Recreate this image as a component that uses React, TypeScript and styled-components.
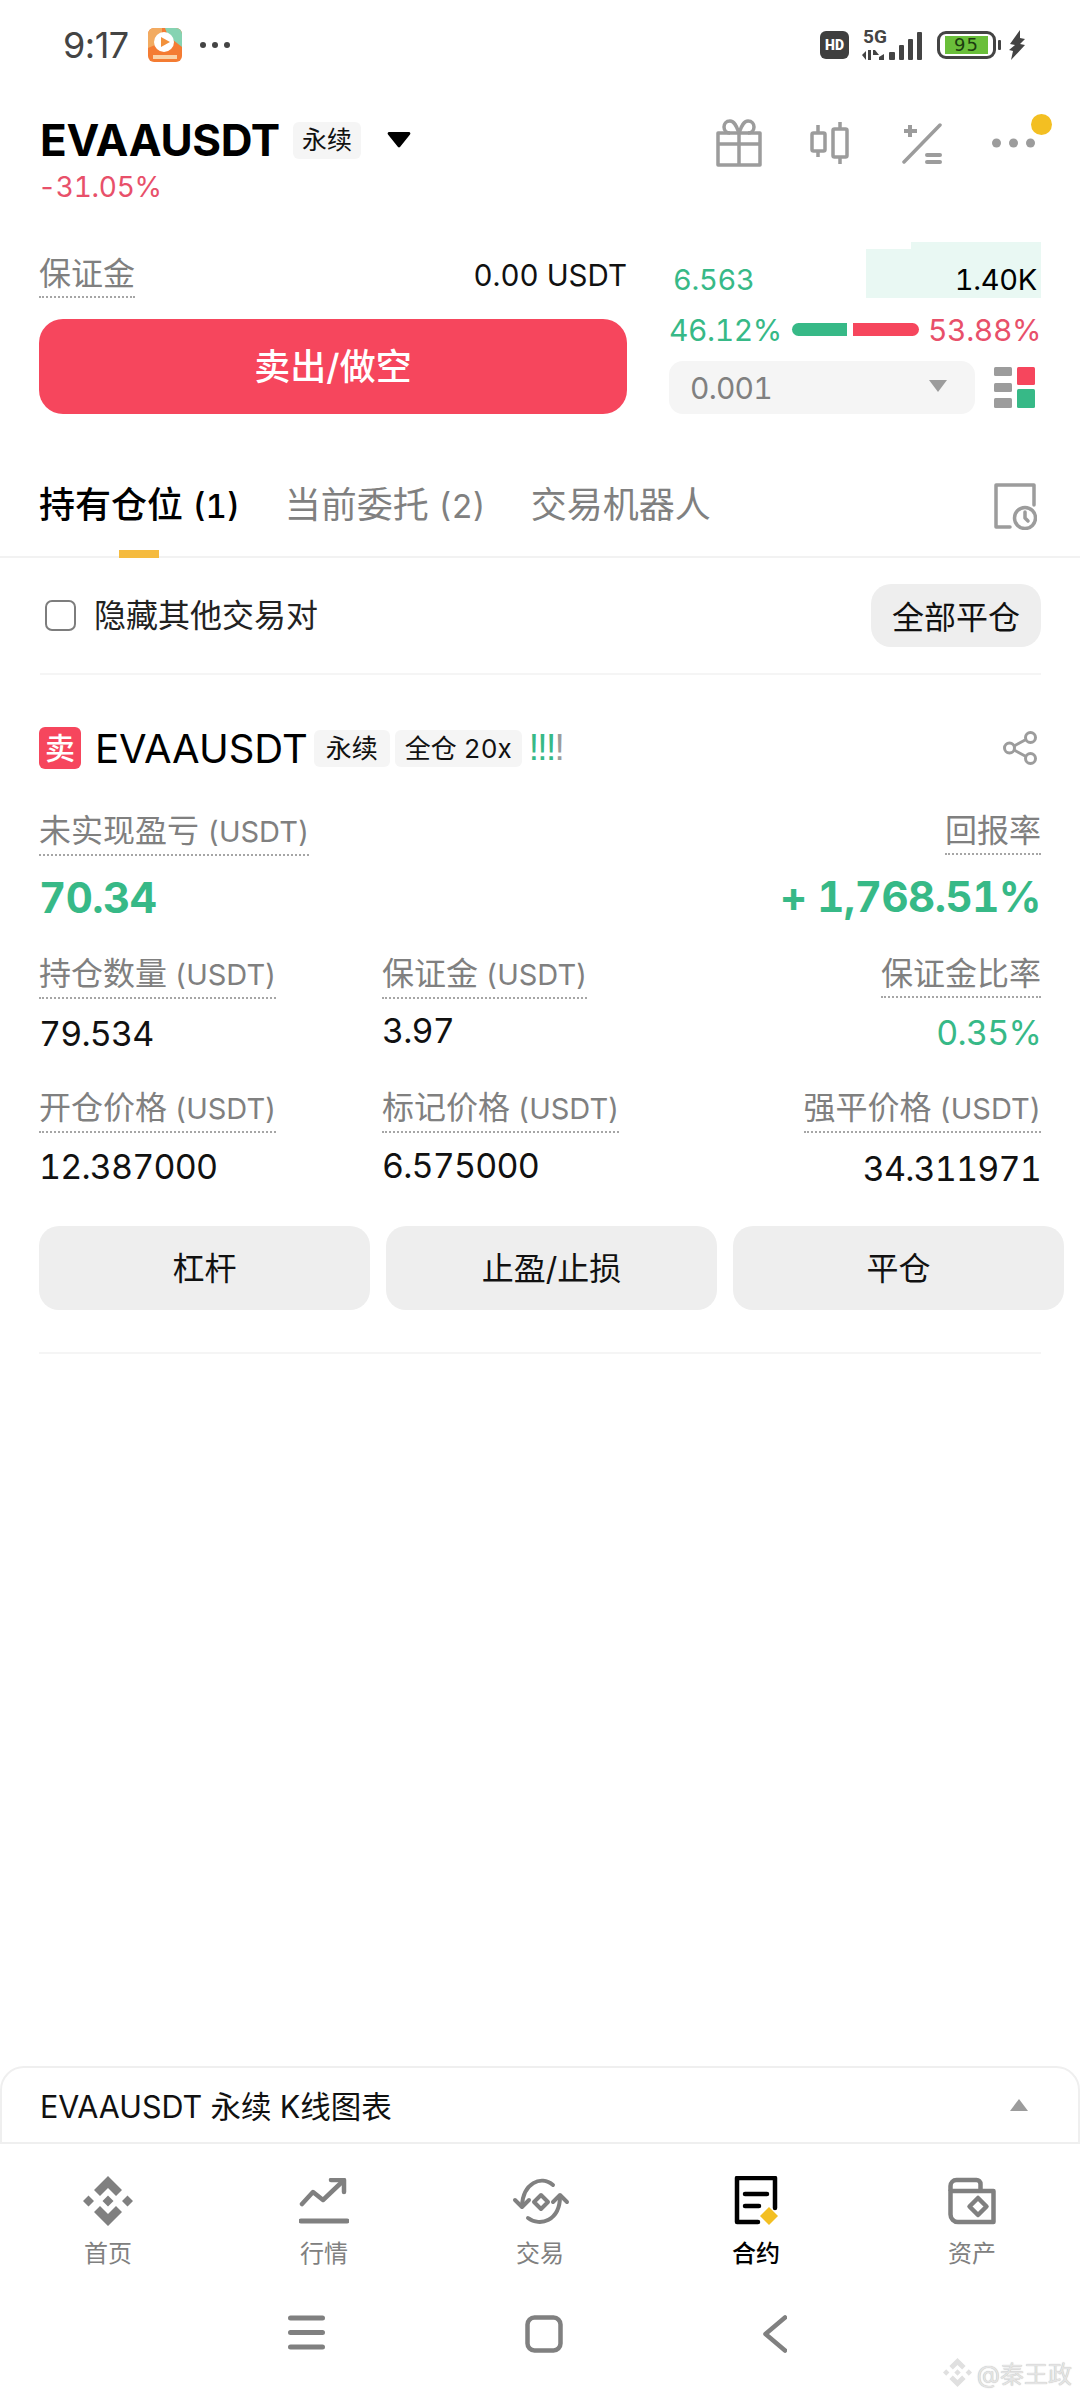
import React from 'react';
import styled, { createGlobalStyle } from 'styled-components';

const green = '#37b987';
const red = '#f6465d';
const grey = '#808080';
const iconGrey = '#9c9c9c';

const GlobalStyle = createGlobalStyle`
  html, body { margin: 0; padding: 0; background: #fff; }
  body {
    font-family: Inter, "Noto Sans CJK SC", sans-serif;
    font-variant-numeric: tabular-nums;
    color: #000;
  }
  * { box-sizing: border-box; }
`;

const Page = styled.div`
  position: relative;
  width: 1080px;
  height: 2400px;
  display: flex;
  flex-direction: column;
  overflow: hidden;
`;

/* status bar */
const StatusBar = styled.div`
  height: 90px;
  flex: none;
  display: flex;
  align-items: center;
  padding: 0 55px 0 63px;
`;
const Clock = styled.span`
  font-size: 36px;
  font-variant-numeric: normal;
  color: #444;
  letter-spacing: -0.5px;
  margin-right: 19px;
`;
const StatusRight = styled.div`
  margin-left: auto;
  display: flex;
  align-items: center;
`;
const HdBadge = styled.span`
  width: 29px;
  height: 28px;
  border-radius: 6px;
  background: #3f3f3f;
  color: #fff;
  font: 900 14px Roboto, sans-serif;
  display: flex;
  align-items: center;
  justify-content: center;
  margin-right: 13px;
`;
const Network = styled.div`
  position: relative;
  display: flex;
`;
const NetworkLabel = styled.span`
  position: absolute;
  left: 1px;
  top: -3px;
  font: 700 19px/20px Roboto, sans-serif;
  color: #444;
`;
const Battery = styled.div`
  width: 59px;
  height: 28px;
  border: 3px solid #444;
  border-radius: 9px;
  padding: 2px 5px;
  margin-left: 15px;
`;
const BatteryFill = styled.div`
  height: 100%;
  background: #6abf3a;
  color: #1c3d10;
  line-height: 18px;
  text-align: center;
  letter-spacing: 1px;
  font-family: "DejaVu Sans", sans-serif;
  font-size: 18px;
`;
const BatteryNub = styled.div`
  width: 3px;
  height: 10px;
  background: #444;
  border-radius: 1px;
  margin: 0 8px 0 2px;
`;

/* header */
const Header = styled.header`
  height: 120px;
  flex: none;
  padding: 29px 28px 0 40px;
  display: flex;
  justify-content: space-between;
  align-items: flex-start;
`;
const TitleRow = styled.div`
  display: flex;
  align-items: center;
  height: 42px;
`;
const Symbol = styled.h1`
  margin: 0;
  font-size: 44px;
  line-height: 42px;
  font-weight: 700;
  letter-spacing: -0.3px;
`;
const Tag = styled.span<{ $pad?: number; $size?: number }>`
  height: 37px;
  padding: 0 ${(p) => p.$pad ?? 9}px;
  border-radius: 6px;
  background: #f5f5f5;
  font-size: ${(p) => p.$size ?? 25}px;
  line-height: 37px;
  white-space: nowrap;
  color: #111;
`;
const TitleTag = styled(Tag)`
  margin-left: 13px;
`;
const Change = styled.div`
  margin-top: 8px;
  margin-left: -2px;
  font-size: 28px;
  line-height: 36px;
  letter-spacing: -0.3px;
  color: #e8506a;
`;
const HeaderIcons = styled.div`
  position: relative;
  display: flex;
  align-items: center;
`;
const NoticeDot = styled.span`
  position: absolute;
  top: -5px;
  right: 0;
  width: 21px;
  height: 21px;
  border-radius: 50%;
  background: #f3bf22;
`;

/* trade panel */
const Trade = styled.section`
  height: 174px;
  flex: none;
  margin-top: 30px;
  padding: 0 39px 0 39px;
  display: flex;
  justify-content: space-between;
`;
const TradeLeft = styled.div`
  width: 588px;
  display: flex;
  flex-direction: column;
  justify-content: flex-end;
`;
const MarginRow = styled.div`
  display: flex;
  justify-content: space-between;
  align-items: flex-start;
  margin-bottom: 21px;
`;
const Label = styled.span`
  display: inline-block;
  font-size: 32px;
  line-height: 34px;
  color: ${grey};
  border-bottom: 2px dotted #a6a6a6;
  padding-bottom: 5px;
  white-space: nowrap;
`;
const Unit = styled.span`
  font-size: 29px;
`;
const Balance = styled.span`
  font-size: 29.5px;
  line-height: 36px;
  color: #111;
`;
const SellButton = styled.button`
  height: 95px;
  padding: 0 0 5px;
  border: 0;
  border-radius: 24px;
  background: ${red};
  color: #fff;
  font: inherit;
  font-size: 36px;
  font-weight: 500;
`;
const TradeRight = styled.div`
  width: 372px;
  display: flex;
  flex-direction: column;
  justify-content: flex-end;
`;
const DepthRow = styled.div`
  height: 56px;
  display: flex;
  justify-content: space-between;
  align-items: flex-end;
  padding: 0 4px 0 4px;
  font-size: 29px;
  line-height: 36px;
  letter-spacing: -0.3px;
  background:
    linear-gradient(#e9f8f3, #e9f8f3) right top / 130px 100% no-repeat,
    linear-gradient(#e9f8f3, #e9f8f3) right bottom / 175px 49px no-repeat;
`;
const Bid = styled.span`
  color: ${green};
`;
const Ratio = styled.div`
  height: 63px;
  display: flex;
  align-items: center;
  justify-content: space-between;
  font-size: 30px;
  letter-spacing: -0.4px;
`;
const RatioBar = styled.div`
  width: 127px;
  height: 13px;
  display: flex;
  gap: 6px;
`;
const RatioFill = styled.span<{ $side: 'buy' | 'sell' }>`
  background: ${(p) => (p.$side === 'buy' ? green : red)};
  border-radius: ${(p) => (p.$side === 'buy' ? '7px 0 0 7px' : '0 7px 7px 0')};
`;
const Sell = styled.span`
  color: #e8506a;
`;
const PrecisionRow = styled.div`
  display: flex;
  align-items: center;
  justify-content: space-between;
`;
const PrecisionSelect = styled.div`
  width: 306px;
  height: 53px;
  border-radius: 14px;
  background: #f5f5f5;
  padding: 0 28px 0 21px;
  display: flex;
  align-items: center;
  justify-content: space-between;
  font-size: 30px;
  letter-spacing: -0.8px;
  color: ${grey};
`;
const CaretDown = styled.span`
  width: 0;
  height: 0;
  border-left: 9px solid transparent;
  border-right: 9px solid transparent;
  border-top: 12px solid ${iconGrey};
  margin-top: -4px;
`;
const LayoutBox = styled.span`
  display: flex;
  margin-right: 6px;
`;

/* tabs */
const Tabs = styled.nav`
  height: 144px;
  flex: none;
  padding: 69px 43px 0 39px;
  display: flex;
  align-items: stretch;
  gap: 45px;
  border-bottom: 2px solid #f2f2f2;
`;
const Tab = styled.div<{ $active?: boolean }>`
  position: relative;
  font-size: 36px;
  line-height: 44px;
  font-weight: ${(p) => (p.$active ? 500 : 400)};
  color: ${(p) => (p.$active ? '#000' : grey)};
  white-space: nowrap;
  &::after {
    content: '';
    display: ${(p) => (p.$active ? 'block' : 'none')};
    position: absolute;
    left: 50%;
    bottom: -2px;
    width: 40px;
    height: 8px;
    margin-left: -20px;
    background: #f5bb3f;
  }
`;
const TabCount = styled.span`
  font-size: 33px;
`;
const TabSpacer = styled.div`
  flex: 1;
  display: flex;
  justify-content: flex-end;
`;

/* position card */
const HideRow = styled.div`
  height: 117px;
  flex: none;
  margin: 0 39px 0 40px;
  padding-left: 5px;
  display: flex;
  align-items: center;
  border-bottom: 2px solid #f5f5f5;
`;
const Check = styled.span`
  width: 31px;
  height: 31px;
  border: 2.5px solid #7d7d7d;
  border-radius: 7px;
  margin-right: 18px;
`;
const HideText = styled.span`
  font-size: 32px;
  line-height: 38px;
  color: #222;
`;
const CloseAll = styled.button`
  margin-left: auto;
  width: 170px;
  height: 63px;
  padding: 0 0 2px;
  border: 0;
  border-radius: 20px;
  background: #eeeeee;
  font: inherit;
  font-size: 32px;
  color: #111;
`;
const Position = styled.section`
  flex: none;
  padding: 52px 39px 0 39px;
`;
const PositionHead = styled.div`
  height: 42px;
  display: flex;
  align-items: center;
`;
const SideBadge = styled.span`
  width: 42px;
  height: 42px;
  border-radius: 6px;
  background: ${red};
  color: #fff;
  font-size: 30px;
  font-weight: 500;
  line-height: 42px;
  text-align: center;
  margin-right: 14px;
`;
const PositionSymbol = styled.span`
  font-size: 40px;
  margin-right: 6px;
`;
const Leverage = styled.span`
  display: flex;
  gap: 5px;
`;
const Bars = styled.span`
  margin-left: 7px;
  font-family: "Liberation Sans", sans-serif;
  font-size: 37px;
  letter-spacing: -1.7px;
  color: ${green};
`;
const BarLast = styled.span`
  color: ${iconGrey};
`;
const ShareBox = styled.span`
  margin-left: auto;
  margin-right: 4px;
  display: flex;
`;
const PnlRow = styled.div`
  margin-top: 45px;
  display: flex;
  justify-content: space-between;
`;
const PnlColumn = styled.div<{ $right?: boolean }>`
  display: flex;
  flex-direction: column;
  align-items: ${(p) => (p.$right ? 'flex-end' : 'flex-start')};
`;
const PnlValue = styled.div`
  margin-top: 17px;
  font-size: 42px;
  line-height: 50px;
  font-weight: 700;
  letter-spacing: -0.5px;
  color: ${green};
`;
const Metrics = styled.div`
  margin-top: 34px;
  display: grid;
  grid-template-columns: 343px 1fr auto;
  row-gap: 36px;
`;
const Metric = styled.div<{ $right?: boolean }>`
  display: flex;
  flex-direction: column;
  align-items: ${(p) => (p.$right ? 'flex-end' : 'flex-start')};
`;
const MetricValue = styled.div<{ $lift?: number; $green?: boolean }>`
  margin-top: ${(p) => 14 - (p.$lift ?? 0)}px;
  margin-bottom: ${(p) => p.$lift ?? 0}px;
  font-size: 34px;
  line-height: 42px;
  letter-spacing: -0.8px;
  color: ${(p) => (p.$green ? green : '#111')};
`;
const Actions = styled.div`
  margin-top: 37px;
  width: 1026px;
  display: grid;
  grid-template-columns: repeat(3, 331px);
  column-gap: 16px;
`;
const ActionButton = styled.button`
  height: 84px;
  padding: 0 0 5px;
  border: 0;
  border-radius: 20px;
  background: #eeeeee;
  font: inherit;
  font-size: 32px;
  color: #111;
`;
const CardEnd = styled.div`
  margin-top: 42px;
  height: 2px;
  background: #f5f5f5;
`;

/* bottom */
const Spacer = styled.div`
  flex: 1;
`;
const ChartBar = styled.div`
  height: 78px;
  flex: none;
  border: 2px solid #efefef;
  border-radius: 24px 24px 0 0;
  padding: 0 50px 0 38px;
  display: flex;
  align-items: center;
  justify-content: space-between;
  font-size: 30.5px;
  color: #111;
`;
const CaretUp = styled.span`
  width: 0;
  height: 0;
  border-left: 9px solid transparent;
  border-right: 9px solid transparent;
  border-bottom: 12px solid ${iconGrey};
`;
const TabBar = styled.nav`
  height: 141px;
  flex: none;
  padding-top: 32px;
  display: grid;
  grid-template-columns: repeat(5, 216px);
`;
const NavItem = styled.div<{ $active?: boolean }>`
  display: flex;
  flex-direction: column;
  align-items: center;
  font-size: 24px;
  line-height: 30px;
  color: ${(p) => (p.$active ? '#000' : grey)};
  font-weight: ${(p) => (p.$active ? 500 : 400)};
`;
const NavIcon = styled.span`
  height: 50px;
  margin-bottom: 13px;
  display: flex;
  align-items: center;
`;
const SystemNav = styled.div`
  height: 115px;
  flex: none;
  padding: 30px 293px 0 288px;
  display: flex;
  justify-content: space-between;
  align-items: flex-start;
`;
const Watermark = styled.div`
  position: absolute;
  right: 8px;
  bottom: 10px;
  display: flex;
  align-items: center;
  gap: 5px;
  font-size: 24px;
  color: #e4e4e4;
  text-shadow: 0 0 1px #aaa;
`;

const Gift = () => (
  <svg width="46" height="48" viewBox="0 0 46 48" fill="none" stroke={iconGrey} strokeWidth="3.5" strokeLinejoin="round" style={{ marginRight: 48 }}>
    <path d="M2 14h42v32H2zM2 25h42M23 14v32" />
    <path d="M23 14c-2-5-4-12-9-12-4 0-6 3-6 6 0 4 3 6 6 6M23 14c2-5 4-12 9-12 4 0 6 3 6 6 0 4-3 6-6 6" />
  </svg>
);
const Candles = () => (
  <svg width="39" height="44" viewBox="0 0 39 44" fill="none" stroke={iconGrey} strokeWidth="3.5" strokeLinejoin="round" style={{ marginRight: 53 }}>
    <path d="M8 4v32M30 1v42" fill="none" />
    <rect x="2" y="12" width="13" height="18" rx="1.5" fill="#fff" />
    <rect x="23" y="8" width="14" height="28" rx="1.5" fill="#fff" />
  </svg>
);
const Calc = () => (
  <svg width="40" height="41" viewBox="0 0 40 41" fill="none" stroke={iconGrey} strokeWidth="3.5" strokeLinecap="round" style={{ marginRight: 50 }}>
    <path d="M38 2L2 39" />
    <path d="M8 2v12M2 8h13" strokeWidth="4" strokeLinecap="butt" />
    <path d="M25 32h13M25 39h13" strokeWidth="4" />
  </svg>
);
const Dots = () => (
  <svg width="44" height="10" viewBox="0 0 44 10" fill={iconGrey} style={{ marginRight: 16 }}>
    <circle cx="4.5" cy="5" r="4.5" />
    <circle cx="21.5" cy="5" r="4.5" />
    <circle cx="38.5" cy="5" r="4.5" />
  </svg>
);
const AppIcon = () => (
  <svg width="34" height="34" viewBox="0 0 34 34" style={{ marginRight: 18 }}>
    <rect width="34" height="34" rx="6" fill="#f47c33" />
    <path d="M17 0h11a6 6 0 0 1 6 6v13L20 8z" fill="#86d3b2" />
    <path d="M0 6a6 6 0 0 1 6-6h8v14L0 20z" fill="#f2ab61" />
    <circle cx="16" cy="14" r="10" fill="#fff" />
    <path d="M13 9l9 5-9 5z" fill="#f2913c" />
    <rect x="5" y="27" width="24" height="4" fill="#f9d3a8" />
  </svg>
);
const MoreDots = () => (
  <svg width="30" height="8" viewBox="0 0 30 8" fill="#444">
    <circle cx="3" cy="4" r="3" />
    <circle cx="15" cy="4" r="3" />
    <circle cx="27" cy="4" r="3" />
  </svg>
);
const Signal = () => (
  <svg width="60" height="30" viewBox="0 0 60 30" fill="#444">
    <path d="M0 25l4-4v9zM6 20h3v10H6zM11 20h2l4 5h-6z" />
    <path d="M17 27l5-3v6h-5z" />
    <rect x="27" y="22" width="6" height="8" rx="1" />
    <rect x="37" y="15" width="5" height="15" rx="1" />
    <rect x="46" y="9" width="5" height="21" rx="1" />
    <rect x="55" y="2" width="5" height="28" rx="1" />
  </svg>
);
const Bolt = () => (
  <svg width="16" height="30" viewBox="0 0 16 30" fill="#444">
    <path d="M11 0L1 14l5 1-6 5 4 1-2 9 14-15-5-1 5-5-5-1z" />
  </svg>
);
const Triangle = () => (
  <svg width="24" height="16" viewBox="0 0 24 16" style={{ marginLeft: 26 }}>
    <path d="M2 0h20a1.500 1.500 0 0 1 1 2.500L13 15a1.500 1.500 0 0 1-2 0L1 2.500A1.500 1.500 0 0 1 2 0z" fill="#000" />
  </svg>
);
const LayoutIcon = () => (
  <svg width="41" height="41" viewBox="0 0 41 41">
    <rect x="0" y="0" width="18" height="9" rx="1.500" fill={iconGrey} />
    <rect x="0" y="16" width="18" height="9" rx="1.500" fill={iconGrey} />
    <rect x="0" y="31" width="18" height="10" rx="1.500" fill={iconGrey} />
    <rect x="23" y="0" width="18" height="18" rx="1.500" fill={red} />
    <rect x="23" y="22" width="18" height="19" rx="1.500" fill={green} />
  </svg>
);
const HistoryIcon = () => (
  <svg width="43" height="47" viewBox="0 0 43 47" fill="none" stroke={iconGrey} strokeWidth="3.500" strokeLinejoin="round" strokeLinecap="round">
    <path d="M16 44H2V2h38v20" />
    <circle cx="31" cy="35" r="10.500" />
    <path d="M31 29v6l3 3" />
  </svg>
);
const ShareIcon = () => (
  <svg width="34" height="34" viewBox="0 0 34 34" fill="none" stroke={iconGrey} strokeWidth="3">
    <circle cx="6.500" cy="17" r="5" />
    <circle cx="27.500" cy="6.500" r="5" />
    <circle cx="27.500" cy="27.500" r="5" />
    <path d="M11 15l12-6.500M11 19l12 6.500" />
  </svg>
);
const BinanceLogo = ({ size = 50, color = grey }: { size?: number; color?: string }) => (
  <svg width={size} height={size} viewBox="0 0 50 50" fill={color}>
    <path d="M25 0l14 14-6 6-8-8-8 8-6-6z" />
    <path d="M25 50L11 36l6-6 8 8 8-8 6 6z" />
    <path d="M5.500 19.500l5.500 5.500-5.500 5.500L0 25zM44.500 19.500L50 25l-5.500 5.500L39 25zM25 19.500l5.500 5.500-5.500 5.500-5.500-5.500z" />
  </svg>
);
const MarketIcon = () => (
  <svg width="50" height="46" viewBox="0 0 50 46" fill="none" stroke={grey} strokeLinecap="round" strokeLinejoin="round">
    <path d="M3 26l11-12 10 8L44 3" strokeWidth="4.500" />
    <path d="M32 2h13v12" strokeWidth="4.500" />
    <path d="M2 43h46" strokeWidth="5" />
  </svg>
);
const TradeIcon = () => (
  <svg width="60" height="48" viewBox="0 0 60 48" fill="none" stroke={grey} strokeWidth="4" strokeLinecap="round" strokeLinejoin="round">
    <path d="M43 8C31-2 13 6 12 29" />
    <path d="M5 23l7 7 7-7" />
    <path d="M18 41C30 50 50 44 50 19" />
    <path d="M43 25l7-7 7 7" />
    <path d="M31 18l7 7-7 7-7-7z" />
  </svg>
);
const ContractIcon = () => (
  <svg width="44" height="50" viewBox="0 0 44 50">
    <path d="M24 46H3V2h38v30" fill="none" stroke="#000" strokeWidth="4.500" strokeLinejoin="round" strokeLinecap="round" />
    <path d="M11 18h22M11 30h14" fill="none" stroke="#000" strokeWidth="4.500" strokeLinecap="round" />
    <path d="M35 31l9 9-9 9-9-9z" fill="#f3bf22" />
  </svg>
);
const WalletIcon = () => (
  <svg width="48" height="48" viewBox="0 0 48 48" fill="none" stroke={grey} strokeWidth="4.500" strokeLinejoin="round">
    <path d="M2.500 14V9a6 6 0 0 1 6-6h20a4 4 0 0 1 4 4v7" />
    <path d="M2.500 14h43v31H10a7.500 7.500 0 0 1-7.500-7.500z" />
    <path d="M30 21l8.500 8.500-8.500 8.500-8.500-8.500z" />
  </svg>
);
const MenuIcon = () => (
  <svg width="37" height="35" viewBox="0 0 37 35" stroke={grey} strokeWidth="5" strokeLinecap="round">
    <path d="M2.500 3h32M2.500 17.500h32M2.500 32h32" />
  </svg>
);
const HomeIcon = () => (
  <svg width="38" height="38" viewBox="0 0 38 38" fill="none" stroke={grey} strokeWidth="4.500">
    <rect x="2.500" y="2.500" width="33" height="33" rx="7" />
  </svg>
);
const BackIcon = () => (
  <svg width="24" height="38" viewBox="0 0 24 38" fill="none" stroke={grey} strokeWidth="4.500" strokeLinecap="round" strokeLinejoin="round">
    <path d="M22 2.500L2.500 19 22 35.500" />
  </svg>
);

const metrics = [
  { label: '持仓数量', unit: ' (USDT)', value: '79.534' },
  { label: '保证金', unit: ' (USDT)', value: '3.97', lift: 3 },
  { label: '保证金比率', value: '0.35%', right: true, green: true },
  { label: '开仓价格', unit: ' (USDT)', value: '12.387000', lift: 1 },
  { label: '标记价格', unit: ' (USDT)', value: '6.575000', lift: 2 },
  { label: '强平价格', unit: ' (USDT)', value: '34.311971', right: true, lift: -1 },
];

const navItems = [
  { label: '首页', icon: <BinanceLogo /> },
  { label: '行情', icon: <MarketIcon /> },
  { label: '交易', icon: <TradeIcon /> },
  { label: '合约', icon: <ContractIcon />, active: true },
  { label: '资产', icon: <WalletIcon /> },
];

const App: React.FC = () => (
  <Page>
    <GlobalStyle />
    <StatusBar>
      <Clock>9:17</Clock>
      <AppIcon />
      <MoreDots />
      <StatusRight>
        <HdBadge>HD</HdBadge>
        <Network>
          <NetworkLabel>5G</NetworkLabel>
          <Signal />
        </Network>
        <Battery>
          <BatteryFill>95</BatteryFill>
        </Battery>
        <BatteryNub />
        <Bolt />
      </StatusRight>
    </StatusBar>

    <Header>
      <div>
        <TitleRow>
          <Symbol>EVAAUSDT</Symbol>
          <TitleTag>永续</TitleTag>
          <Triangle />
        </TitleRow>
        <Change>-31.05%</Change>
      </div>
      <HeaderIcons>
        <Gift />
        <Candles />
        <Calc />
        <Dots />
        <NoticeDot />
      </HeaderIcons>
    </Header>

    <Trade>
      <TradeLeft>
        <MarginRow>
          <Label>保证金</Label>
          <Balance>0.00 USDT</Balance>
        </MarginRow>
        <SellButton>卖出/做空</SellButton>
      </TradeLeft>
      <TradeRight>
        <DepthRow>
          <Bid>6.563</Bid>
          <span>1.40K</span>
        </DepthRow>
        <Ratio>
          <Bid>46.12%</Bid>
          <RatioBar>
            <RatioFill $side="buy" style={{ width: '46%' }} />
            <RatioFill $side="sell" style={{ width: '54%' }} />
          </RatioBar>
          <Sell>53.88%</Sell>
        </Ratio>
        <PrecisionRow>
          <PrecisionSelect>
            0.001
            <CaretDown />
          </PrecisionSelect>
          <LayoutBox>
            <LayoutIcon />
          </LayoutBox>
        </PrecisionRow>
      </TradeRight>
    </Trade>

    <Tabs>
      <Tab $active>
        持有仓位 <TabCount>(1)</TabCount>
      </Tab>
      <Tab>
        当前委托 <TabCount>(2)</TabCount>
      </Tab>
      <Tab>交易机器人</Tab>
      <TabSpacer>
        <HistoryIcon />
      </TabSpacer>
    </Tabs>

    <HideRow>
      <Check />
      <HideText>隐藏其他交易对</HideText>
      <CloseAll>全部平仓</CloseAll>
    </HideRow>

    <Position>
      <PositionHead>
        <SideBadge>卖</SideBadge>
        <PositionSymbol>EVAAUSDT</PositionSymbol>
        <Leverage>
          <Tag $pad={12} $size={26}>永续</Tag>
          <Tag $pad={10} $size={26}>全仓 20x</Tag>
        </Leverage>
        <Bars>
          !!!<BarLast>!</BarLast>
        </Bars>
        <ShareBox>
          <ShareIcon />
        </ShareBox>
      </PositionHead>
      <PnlRow>
        <PnlColumn>
          <Label>
            未实现盈亏 <Unit>(USDT)</Unit>
          </Label>
          <PnlValue>70.34</PnlValue>
        </PnlColumn>
        <PnlColumn $right>
          <Label>回报率</Label>
          <PnlValue>+ 1,768.51%</PnlValue>
        </PnlColumn>
      </PnlRow>
      <Metrics>
        {metrics.map((m) => (
          <Metric key={m.label} $right={m.right}>
            <Label>
              {m.label}
              {m.unit && <Unit>{m.unit}</Unit>}
            </Label>
            <MetricValue $lift={m.lift} $green={m.green}>
              {m.value}
            </MetricValue>
          </Metric>
        ))}
      </Metrics>
      <Actions>
        <ActionButton>杠杆</ActionButton>
        <ActionButton>止盈/止损</ActionButton>
        <ActionButton>平仓</ActionButton>
      </Actions>
      <CardEnd />
    </Position>

    <Spacer />
    <ChartBar>
      EVAAUSDT 永续 K线图表
      <CaretUp />
    </ChartBar>
    <TabBar>
      {navItems.map((n) => (
        <NavItem key={n.label} $active={n.active}>
          <NavIcon>{n.icon}</NavIcon>
          {n.label}
        </NavItem>
      ))}
    </TabBar>
    <SystemNav>
      <MenuIcon />
      <HomeIcon />
      <BackIcon />
    </SystemNav>
    <Watermark>
      <BinanceLogo size={29} color="#e0e0e0" />
      @秦王政
    </Watermark>
  </Page>
);

export default App;
